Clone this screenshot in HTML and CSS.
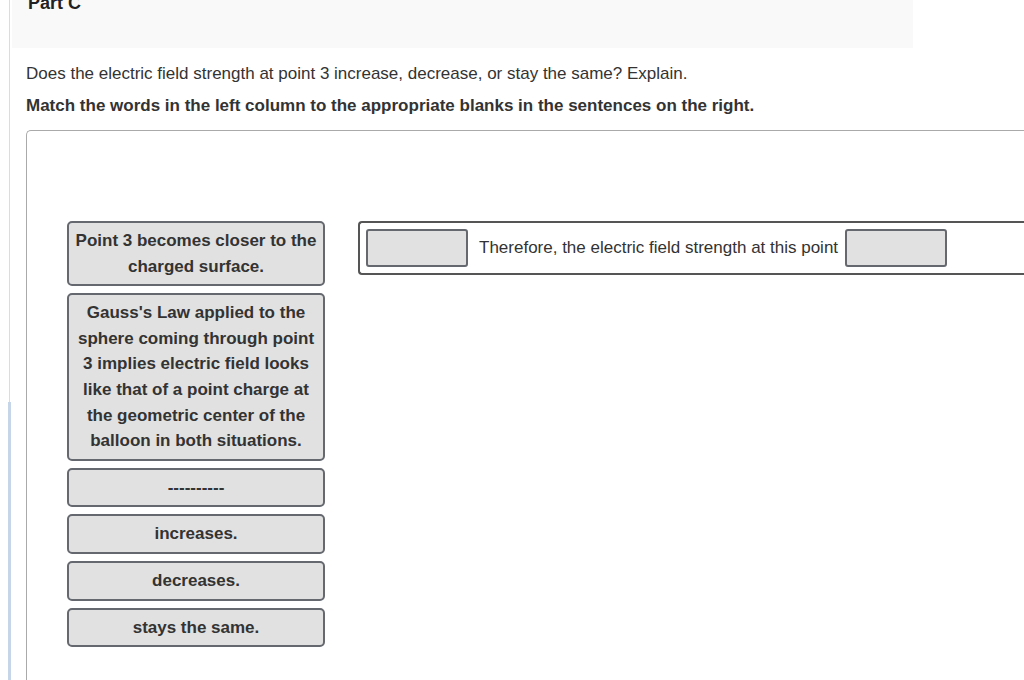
FILE: index.html
```html
<!DOCTYPE html>
<html lang="en">
<head>
    <meta charset="UTF-8">
    <meta name="viewport" content="width=device-width, initial-scale=1.0">
    <title>Part C</title>
    <link rel="stylesheet" href="styles.css">
</head>
<body>
    <div class="page">
        <!-- Part header -->
        <div class="part-header">
            <h2 class="part-title">Part C</h2>
        </div>

        <div class="part-body">
            <p class="question">Does the electric field strength at point 3 increase, decrease, or stay the same? Explain.</p>
            <p class="instructions">Match the words in the left column to the appropriate blanks in the sentences on the right.</p>

            <!-- Matching area -->
            <div class="match-box">
                <div class="word-bank">
                    <div class="word-tile">Point 3 becomes closer to the charged surface.</div>
                    <div class="word-tile">Gauss's Law applied to the sphere coming through point 3 implies electric field looks like that of a point charge at the geometric center of the balloon in both situations.</div>
                    <div class="word-tile">----------</div>
                    <div class="word-tile">increases.</div>
                    <div class="word-tile">decreases.</div>
                    <div class="word-tile">stays the same.</div>
                </div>
                <div class="sentences">
                    <div class="sentence">
                        <div class="blank"></div>
                        <span class="sentence-text">Therefore, the electric field strength at this point</span>
                        <div class="blank"></div>
                    </div>
                </div>
            </div>
        </div>
    </div>
</body>
</html>
```

FILE: styles.css
```css
* {margin: 0; padding: 0; box-sizing: border-box;}
html, body {overflow: hidden; height: 100%;}
body {font-family: "Liberation Sans", Arial, Helvetica, sans-serif; background: #fff; color: #333; font-size: 17px;}

/* left rail */
.page {position: relative; margin-left: 9px; border-left: 1px solid #d3deea; min-height: 100%;}
.page::after {content: ""; position: absolute; left: -2px; top: 402px; bottom: 0; width: 3px; background: #c6d5e7;}

/* header */
.part-header {margin-left: 2px; width: 901px; height: 48px; background: #f9f9f9; padding-left: 16px; display: flow-root;}
.part-title {font-size: 18px; font-weight: bold; line-height: 22px; margin-top: -8px; color: #222;}

.part-body {padding-left: 16px;}
.question {margin-top: 16px; line-height: 20px;}
.instructions {margin-top: 12px; line-height: 20px; font-weight: bold;}

/* matching area */
.match-box {margin-top: 14px; width: 1010px; min-height: 600px; border: 1px solid #aaa; border-right: none; border-bottom: none; border-radius: 5px 0 0 0; padding: 90px 0 0 40px; display: flex; align-items: flex-start; gap: 33px;}
.word-bank {width: 258px; display: flex; flex-direction: column; gap: 7px;}
.word-tile {background: #e1e1e1; border: 2px solid #666870; border-radius: 5px; padding: 5px 2px; text-align: center; font-weight: bold; line-height: 25.6px; color: #333;}

.sentences {flex: 1;}
.sentence {display: flex; align-items: center; border: 2px solid #555; border-right: none; border-radius: 4px 0 0 4px; padding: 6px;}
.blank {width: 102px; height: 38px; background: #e1e1e1; border: 2px solid #666870; border-radius: 3px; flex: none;}
.sentence-text {margin: 0 7px 0 11px; white-space: nowrap; color: #333;}
```
